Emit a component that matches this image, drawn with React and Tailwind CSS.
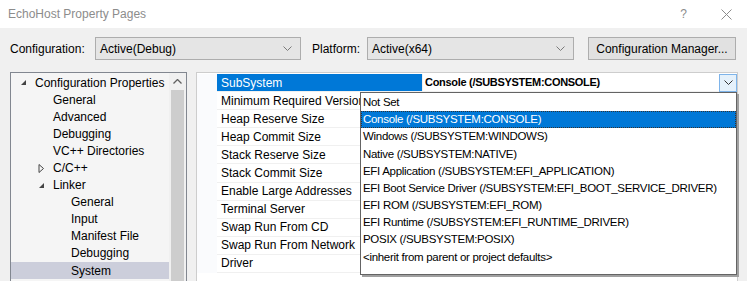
import React from 'react';

const font = { fontFamily: '"Liberation Sans", Arial, sans-serif' };

const treeItems = [
  { label: 'Configuration Properties', level: 0, arrow: 'open' },
  { label: 'General', level: 1 },
  { label: 'Advanced', level: 1 },
  { label: 'Debugging', level: 1 },
  { label: 'VC++ Directories', level: 1 },
  { label: 'C/C++', level: 1, arrow: 'closed' },
  { label: 'Linker', level: 1, arrow: 'open' },
  { label: 'General', level: 2 },
  { label: 'Input', level: 2 },
  { label: 'Manifest File', level: 2 },
  { label: 'Debugging', level: 2 },
  { label: 'System', level: 2, selected: true },
];

const props = [
  'SubSystem',
  'Minimum Required Version',
  'Heap Reserve Size',
  'Heap Commit Size',
  'Stack Reserve Size',
  'Stack Commit Size',
  'Enable Large Addresses',
  'Terminal Server',
  'Swap Run From CD',
  'Swap Run From Network',
  'Driver',
];

const options = [
  'Not Set',
  'Console (/SUBSYSTEM:CONSOLE)',
  'Windows (/SUBSYSTEM:WINDOWS)',
  'Native (/SUBSYSTEM:NATIVE)',
  'EFI Application (/SUBSYSTEM:EFI_APPLICATION)',
  'EFI Boot Service Driver (/SUBSYSTEM:EFI_BOOT_SERVICE_DRIVER)',
  'EFI ROM (/SUBSYSTEM:EFI_ROM)',
  'EFI Runtime (/SUBSYSTEM:EFI_RUNTIME_DRIVER)',
  'POSIX (/SUBSYSTEM:POSIX)',
  '<inherit from parent or project defaults>',
];

function Chevron({ color = '#606060' }) {
  return (
    <svg width="9" height="5" viewBox="0 0 9 5" fill="none">
      <path d="M0.5 0.5 L4.5 4.5 L8.5 0.5" stroke={color} strokeWidth="1" />
    </svg>
  );
}

function Combo({ value, width }) {
  return (
    <div
      className="h-[23px] border border-[#adadad] bg-[#e5e5e5] flex items-center justify-between pl-[4px] pr-[8px] text-[12px] text-black"
      style={{ width }}
    >
      <span>{value}</span>
      <Chevron color="#7a7a7a" />
    </div>
  );
}

function Arrow({ type }) {
  if (type === 'open') {
    return (
      <svg width="7" height="7" viewBox="0 0 7 7">
        <path d="M6 1 L6 6 L1 6 Z" fill="#444" />
      </svg>
    );
  }
  return (
    <svg width="7" height="9" viewBox="0 0 7 9">
      <path d="M1 0.5 L5.5 4.5 L1 8.5 Z" fill="none" stroke="#444" strokeWidth="1" />
    </svg>
  );
}

export default function App() {
  return (
    <div className="w-[747px] h-[281px] bg-[#f0f0f0] overflow-hidden relative whitespace-nowrap" style={font}>
      {/* Title bar */}
      <div className="h-[28px] bg-white flex items-center justify-between pl-[8px] pr-[15px]">
        <span className="text-[12px] text-[#8c8c8c]">EchoHost Property Pages</span>
        <div className="flex items-center gap-[34px] text-[#8c8c8c]">
          <span className="text-[12px]">?</span>
          <svg width="11" height="11" viewBox="0 0 11 11">
            <path d="M0.5 0.5 L10.5 10.5 M10.5 0.5 L0.5 10.5" stroke="#8c8c8c" strokeWidth="1" />
          </svg>
        </div>
      </div>

      {/* Config row */}
      <div className="flex items-center pt-[9px] pl-[10px] text-[12px] text-black">
        <span className="w-[85px]">Configuration:</span>
        <Combo value="Active(Debug)" width={206} />
        <span className="ml-[11px] w-[55px]">Platform:</span>
        <Combo value="Active(x64)" width={207} />
        <button className="ml-[14px] w-[148px] h-[23px] border border-[#adadad] bg-[#e1e1e1] text-[12px]">
          Configuration Manager...
        </button>
      </div>

      {/* Main */}
      <div className="flex pt-[12px] pl-[10px]">
        {/* Tree */}
        <div className="w-[177px] h-[220px] border border-[#828790] bg-[#f5f5f5] flex">
          <div className="flex-1 pt-[1px] overflow-hidden">
            {treeItems.map((it, i) => (
              <div
                key={i}
                className={`h-[17.1px] flex items-center text-[12px] text-black ${it.selected ? 'bg-[#cccedb]' : ''}`}
                style={{ paddingLeft: 9 + it.level * 18 }}
              >
                <span className="w-[15px] shrink-0 flex items-center">{it.arrow && <Arrow type={it.arrow} />}</span>
                <span>{it.label}</span>
              </div>
            ))}
          </div>
          <div className="w-[17px] bg-[#f0f0f0] flex flex-col items-center">
            <div className="h-[17px] flex items-center justify-center">
              <svg width="9" height="5" viewBox="0 0 9 5">
                <path d="M0.5 4.5 L4.5 0.5 L8.5 4.5" stroke="#606060" strokeWidth="1.3" fill="none" />
              </svg>
            </div>
            <div className="w-[13px] flex-1 bg-[#cdcdcd]"></div>
          </div>
        </div>

        {/* Property grid */}
        <div className="ml-[9px] w-[542px] h-[220px] border border-[#cdcdcd] bg-white relative">
          <div className="flex pt-[1px]">
            <div className="w-[20px] bg-[#fafbfd]"></div>
            <div className="flex-1">
              {props.map((p, i) => (
                <div key={i} className="h-[18.1px] flex border-b border-[#f0f0f0] text-[12px]">
                  <div
                    className={`w-[205px] flex items-center pl-[4px] overflow-hidden ${i === 0 ? 'bg-[#0078d7] text-white' : 'text-black'}`}
                  >
                    {p}
                  </div>
                  <div className="flex-1 flex items-center justify-between border-l border-[#f0f0f0]">
                    {i === 0 && (
                      <>
                        <span className="pl-[2px] font-bold text-[11px] tracking-[-0.3px]">Console (/SUBSYSTEM:CONSOLE)</span>
                        <div className="w-[18px] h-[18px] border border-[#7eb4ea] bg-[#e5f1fb] flex items-center justify-center">
                          <Chevron color="#333" />
                        </div>
                      </>
                    )}
                  </div>
                </div>
              ))}
            </div>
          </div>

          {/* Dropdown list */}
          <div className="absolute left-[163px] top-[19px] w-[377px] h-[183px] pt-[1px] bg-white border border-[#646464] shadow-[2px_2px_0_#a0a0a0]">
            {options.map((o, i) => (
              <div
                key={i}
                className={`h-[17.2px] flex items-center pl-[2px] text-[11.5px] tracking-[-0.3px] ${
                  i === 1 ? 'bg-[#0078d7] text-white outline-1 outline-dotted outline-offset-[-1px] outline-[#333]' : 'text-black'
                }`}
              >
                {o}
              </div>
            ))}
          </div>
        </div>
      </div>
    </div>
  );
}
